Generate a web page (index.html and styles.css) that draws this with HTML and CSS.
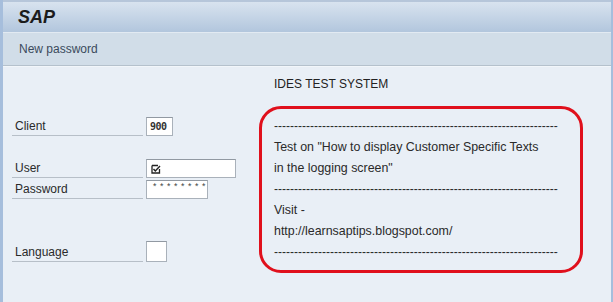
FILE: index.html
```html
<!DOCTYPE html>
<html>
<head>
<meta charset="utf-8">
<link rel="stylesheet" href="styles.css">
</head>
<body>
<div class="frame">
  <div class="titlebar"><span class="sap">SAP</span></div>
  <div class="subbar"><span class="subtitle">New password</span></div>
  <div class="content">
    <div class="form">
      <div class="row row-client">
        <div class="label">Client</div>
        <div class="field f-client">900</div>
      </div>
      <div class="row row-user">
        <div class="label">User</div>
        <div class="field f-user">
          <svg class="chk" width="10" height="10" viewBox="0 0 10 10">
            <path d="M1 1.5H7M1 1.5V9H8.5V5" fill="none" stroke="#222" stroke-width="1.3"/>
            <path d="M2.5 5L4.3 7L9 2" fill="none" stroke="#222" stroke-width="1.4"/>
          </svg>
        </div>
      </div>
      <div class="row row-pass">
        <div class="label">Password</div>
        <div class="field f-pass">********</div>
      </div>
      <div class="row row-lang">
        <div class="label">Language</div>
        <div class="field f-lang"></div>
      </div>
    </div>
    <div class="info">
      <div class="sys">IDES TEST SYSTEM</div>
      <div class="box">
        <div class="line dashes">-----------------------------------------------------------------------</div>
        <div class="line">Test on "How to display Customer Specific Texts</div>
        <div class="line">in the logging screen"</div>
        <div class="line dashes">-----------------------------------------------------------------------</div>
        <div class="line">Visit -</div>
        <div class="line">http://learnsaptips.blogspot.com/</div>
        <div class="line dashes">-----------------------------------------------------------------------</div>
      </div>
    </div>
  </div>
</div>
</body>
</html>
```

FILE: styles.css
```css
html, body {
  margin: 0;
  padding: 0;
}
body {
  width: 613px;
  height: 302px;
  overflow: hidden;
  background: #e9eff6;
  font-family: "Liberation Sans", Arial, sans-serif;
  font-size: 12px;
  color: #333;
}
.frame {
  box-sizing: border-box;
  width: 613px;
  height: 302px;
  border-left: 3px solid #a6bedc;
  border-right: 2px solid #a6bedc;
  background: #e9eff6;
}
.titlebar {
  box-sizing: border-box;
  height: 32px;
  border-top: 2px solid #b6c6da;
  background: linear-gradient(#d8e3ef, #b2c6dd);
  padding-left: 15px;
  display: flex;
  align-items: center;
}
.sap {
  font-weight: bold;
  font-style: italic;
  font-size: 18px;
  color: #1c1c1c;
  margin-top: 1px;
}
.subbar {
  box-sizing: border-box;
  height: 34px;
  border-top: 1px solid #e2eaf2;
  border-bottom: 1px solid #b5c1cc;
  background: #d1dde8;
  padding-left: 16px;
  display: flex;
  align-items: center;
}
.subtitle {
  color: #3b4a5c;
  font-size: 12px;
  margin-top: -1px;
}
.content {
  display: flex;
  border-top: 1px solid #f2f6fa;
}
.form {
  width: 247px;
  padding-left: 9px;
  padding-top: 49px;
}
.row {
  display: flex;
  align-items: flex-end;
  height: 20px;
}
.row-user { margin-top: 22px; }
.row-pass { margin-top: 1px; }
.row-lang { margin-top: 43px; }
.label {
  box-sizing: border-box;
  width: 131px;
  height: 19px;
  padding-left: 3px;
  line-height: 18px;
  border-bottom: 1px solid #b7bfc8;
  color: #2a2a2a;
}
.field {
  box-sizing: border-box;
  margin-left: 3px;
  height: 19px;
  background: #fff;
  border: 1px solid #a9b1ba;
  border-top-color: #9199a2;
  font-family: "Liberation Mono", "DejaVu Sans Mono", monospace;
  font-size: 11px;
  line-height: 17px;
  color: #222;
  padding-left: 2px;
}
.f-client { width: 27px; font-family: "DejaVu Sans Mono", monospace; font-weight: bold; font-size: 10px; letter-spacing: -0.5px; padding-left: 3px; color: #333; }
.f-user { width: 90px; display: flex; align-items: center; padding-left: 4px; }
.f-pass { width: 62px; font-size: 9px; letter-spacing: 1.6px; padding-left: 5px; line-height: 14px; color: #444; }
.f-lang { width: 21px; height: 21px; }
.chk { display: block; }
.info {
  padding-top: 7px;
}
.sys {
  padding-left: 15px;
  line-height: 21px;
  color: #222;
}
.box {
  box-sizing: border-box;
  margin-top: 11px;
  width: 324px;
  height: 167px;
  border: 3px solid #e0101c;
  border-radius: 22px;
  padding: 7px 0 0 12px;
}
.line {
  line-height: 21px;
  white-space: nowrap;
  color: #2a2a2a;
  font-size: 12.4px;
}
.dashes {
  width: 285px;
  overflow: hidden;
  font-size: 12px;
}
```
